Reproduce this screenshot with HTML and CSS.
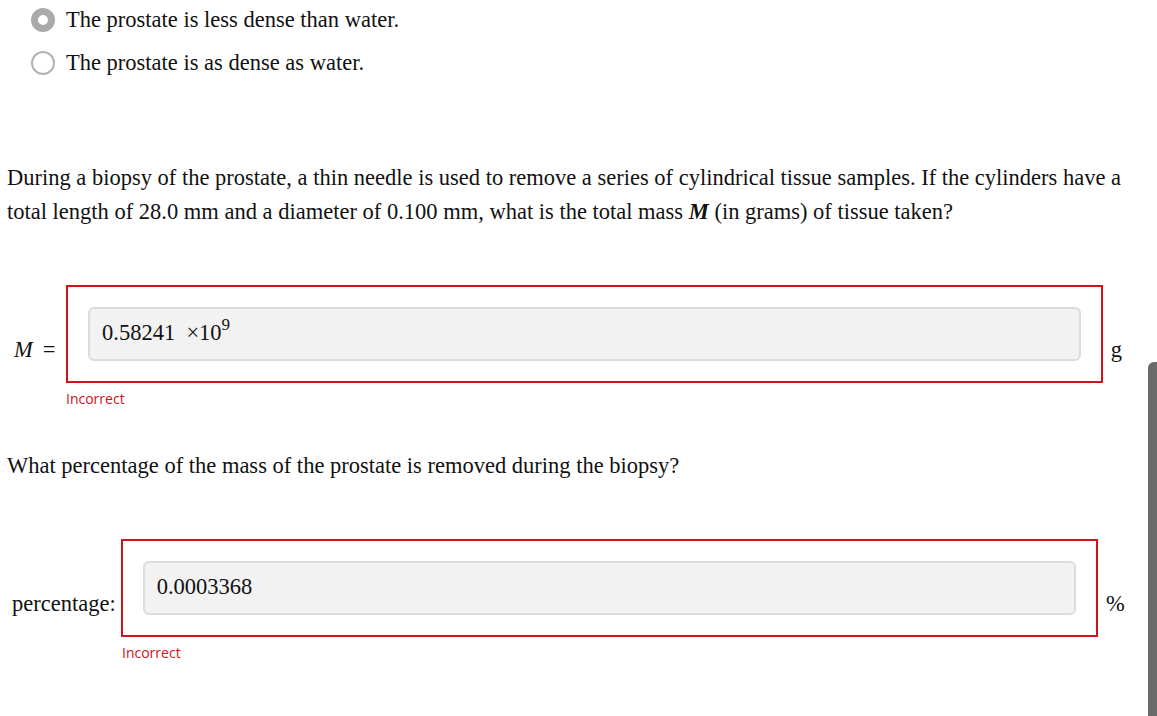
FILE: index.html
```html
<!DOCTYPE html>
<html lang="en">
<head>
    <meta charset="UTF-8">
    <title>Prostate biopsy</title>
    <link rel="stylesheet" href="styles.css">
</head>
<body>
    <div class="page">
        <ul class="choices">
            <li class="choice"><span class="radio checked"></span>The prostate is less dense than water.</li>
            <li class="choice"><span class="radio"></span>The prostate is as dense as water.</li>
        </ul>

        <p class="question q1">During a biopsy of the prostate, a thin needle is used to remove a series of cylindrical tissue samples. If the cylinders have a total length of 28.0 mm and a diameter of 0.100 mm, what is the total mass <b><i>M</i></b> (in grams) of tissue taken?</p>

        <div class="answer">
            <div class="row">
                <span class="label label-m"><i>M</i>=</span>
                <div class="box">
                    <div class="field">0.58241 &nbsp;×10<sup>9</sup></div>
                </div>
                <span class="unit">g</span>
            </div>
            <div class="status status-m">Incorrect</div>
        </div>

        <p class="question q2">What percentage of the mass of the prostate is removed during the biopsy?</p>

        <div class="answer">
            <div class="row">
                <span class="label label-p">percentage:</span>
                <div class="box">
                    <div class="field">0.0003368</div>
                </div>
                <span class="unit unit-p">%</span>
            </div>
            <div class="status status-p">Incorrect</div>
        </div>
    </div>
    <div class="scrollbar"></div>
</body>
</html>
```

FILE: styles.css
```css
*{
    margin: 0;
    padding: 0;
    list-style: none;
    box-sizing: border-box;
}
body{
    background-color: #fff;
    color: #111;
    font-family: "Liberation Serif", "Times New Roman", serif;
    font-size: 22.5px;
    overflow: hidden;
}
.page{
    padding-right: 35px;
}
.choices{
    padding-left: 31px;
}
.choice{
    display: flex;
    align-items: center;
    height: 43px;
    gap: 11px;
    line-height: 43px;
}
.choices .choice:first-child{
    margin-top: -2px;
}
.radio{
    display: inline-block;
    flex: none;
    width: 24px;
    height: 24px;
    border-radius: 50%;
    border: 2px solid #b3b3b3;
    background-color: #fff;
}
.radio.checked{
    border: 7px solid #aaa;
}
.question{
    line-height: 34px;
    padding-left: 7px;
}
.q1{
    margin-top: 77px;
}
.q2{
    margin-top: 41px;
}
.q1 + .answer,
.q2 + .answer{
    margin-top: 56px;
}
.answer{
    padding-left: 12px;
}
.row{
    display: flex;
    align-items: center;
}
.label{
    padding-top: 32px;
    margin-right: 7px;
    white-space: nowrap;
}
.label-m{
    padding-left: 2px;
    width: 47px;
}
.label-m i{
    margin-right: 10px;
}
.label-p{
    margin-right: 5px;
}
.box{
    flex: 1;
    border: 2px solid #d0121b;
    padding: 20px;
}
.field{
    height: 54px;
    background-color: #f2f2f2;
    border: 2px solid #dcdcdc;
    border-radius: 6px;
    padding: 11px 12px 0 12px;
    line-height: 26px;
}
.field sup{
    font-size: 17px;
    line-height: 0;
    position: relative;
    top: -2px;
}
.unit{
    padding-top: 32px;
    margin-left: 8px;
}
.unit-p{
    width: 16px;
    white-space: nowrap;
}
.status{
    color: #d0121b;
    font-family: "Open Sans", "Noto Sans", sans-serif;
    font-size: 14px;
    line-height: 18px;
    margin-top: 7px;
}
.status-m{
    padding-left: 54px;
}
.status-p{
    padding-left: 110px;
}
.scrollbar{
    position: fixed;
    right: 0;
    top: 362px;
    bottom: 0;
    width: 9px;
    background-color: #6b6b6b;
    border-top-left-radius: 6px;
}
```
